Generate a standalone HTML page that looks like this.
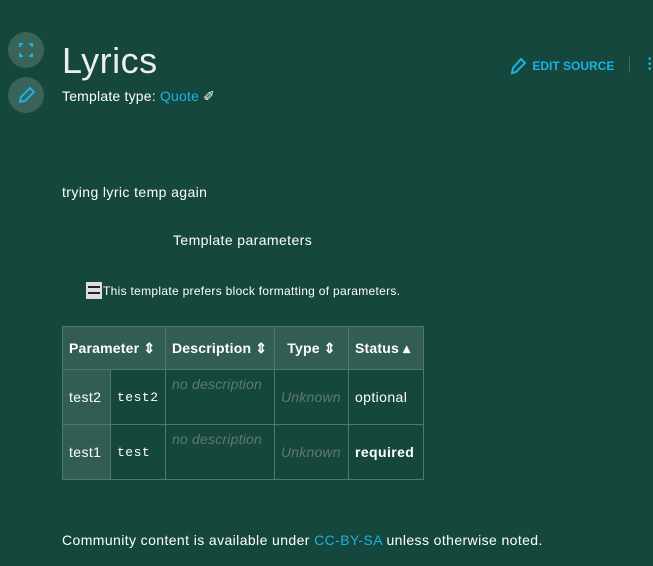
<!DOCTYPE html>
<html><head><meta charset="utf-8"><style>
body{margin:0;width:653px;height:566px;background:#15473d;font-family:"Liberation Sans",sans-serif;color:#fff;position:relative;overflow:hidden;letter-spacing:0.4px}
.a{position:absolute}
.circ{position:absolute;left:8px;width:36px;height:36px;border-radius:50%;background:#3a6359}
table{position:absolute;left:62px;top:326px;border-collapse:collapse;font-size:14px}
td,th{border:1px solid #4f7a70;padding:0 6px;box-sizing:border-box}
th{background:#325d55;height:43px;text-align:left;font-weight:bold;letter-spacing:0.2px}
td{height:55px}
.ph{color:#5d7a73;font-style:italic;letter-spacing:0.2px}
.mono{font-family:"Liberation Mono",monospace;font-size:13px;letter-spacing:0.5px}
</style></head><body>
<div class="circ" style="top:32px"><svg width="36" height="36"><path d="M12 15v-3h3M21 12h3v3M24 21v3h-3M15 24h-3v-3" stroke="#1ab3e6" stroke-width="2" fill="none"/></svg></div>
<div class="circ" style="top:77px"><svg width="36" height="36"><path d="M12 25l1-5 9-9 4 4-9 9z" stroke="#1ab3e6" stroke-width="2" fill="none"/></svg></div>
<div class="a" style="left:62px;top:40px;font-size:36px;color:#eee;letter-spacing:0.5px">Lyrics</div>
<div class="a" style="left:62px;top:88px;font-size:14px;letter-spacing:0.2px">Template type: <span style="color:#1ab3e6">Quote</span> ✐</div>
<div class="a" style="left:509px;top:55px;font-size:12px;font-weight:bold;color:#1ab3e6;letter-spacing:0"><svg width="20" height="20" style="vertical-align:-5px"><path d="M3 18l1-5 8-9 4 4-9 9z" stroke="#1ab3e6" stroke-width="2" fill="none"/></svg> EDIT SOURCE</div>
<div class="a" style="left:629px;top:57px;width:1px;height:16px;background:#3f6b61"></div>
<div class="a" style="left:648px;top:57px;width:4px;height:16px;color:#1ab3e6;font-size:10px;line-height:5px">•<br>•<br>•</div>
<div class="a" style="left:62px;top:184px;font-size:14px">trying lyric temp again</div>
<div class="a" style="left:173px;top:232px;font-size:14px">Template parameters</div>
<div class="a" style="left:86px;top:282px;width:16px;height:17px;background:#ddd"></div>
<div class="a" style="left:88px;top:286px;width:12px;height:2px;background:#222;box-shadow:0 6px 0 #222"></div>
<div class="a" style="left:103px;top:284px;font-size:12px;letter-spacing:0.3px">This template prefers block formatting of parameters.</div>
<table>
<tr><th colspan="2" style="width:103px">Parameter ⇕</th><th style="width:109px">Description ⇕</th><th style="width:74px;text-align:center">Type ⇕</th><th style="width:75px">Status ▴</th></tr>
<tr><td style="background:#325d55;width:48px">test2</td><td class="mono">test2</td><td class="ph" style="vertical-align:top;padding-top:6px">no description</td><td class="ph">Unknown</td><td>optional</td></tr>
<tr><td style="background:#325d55">test1</td><td class="mono">test</td><td class="ph" style="vertical-align:top;padding-top:6px">no description</td><td class="ph">Unknown</td><td><b>required</b></td></tr>
</table>
<div class="a" style="left:62px;top:532px;font-size:14px">Community content is available under <span style="color:#1ab3e6">CC-BY-SA</span> unless otherwise noted.</div>
</body></html>
